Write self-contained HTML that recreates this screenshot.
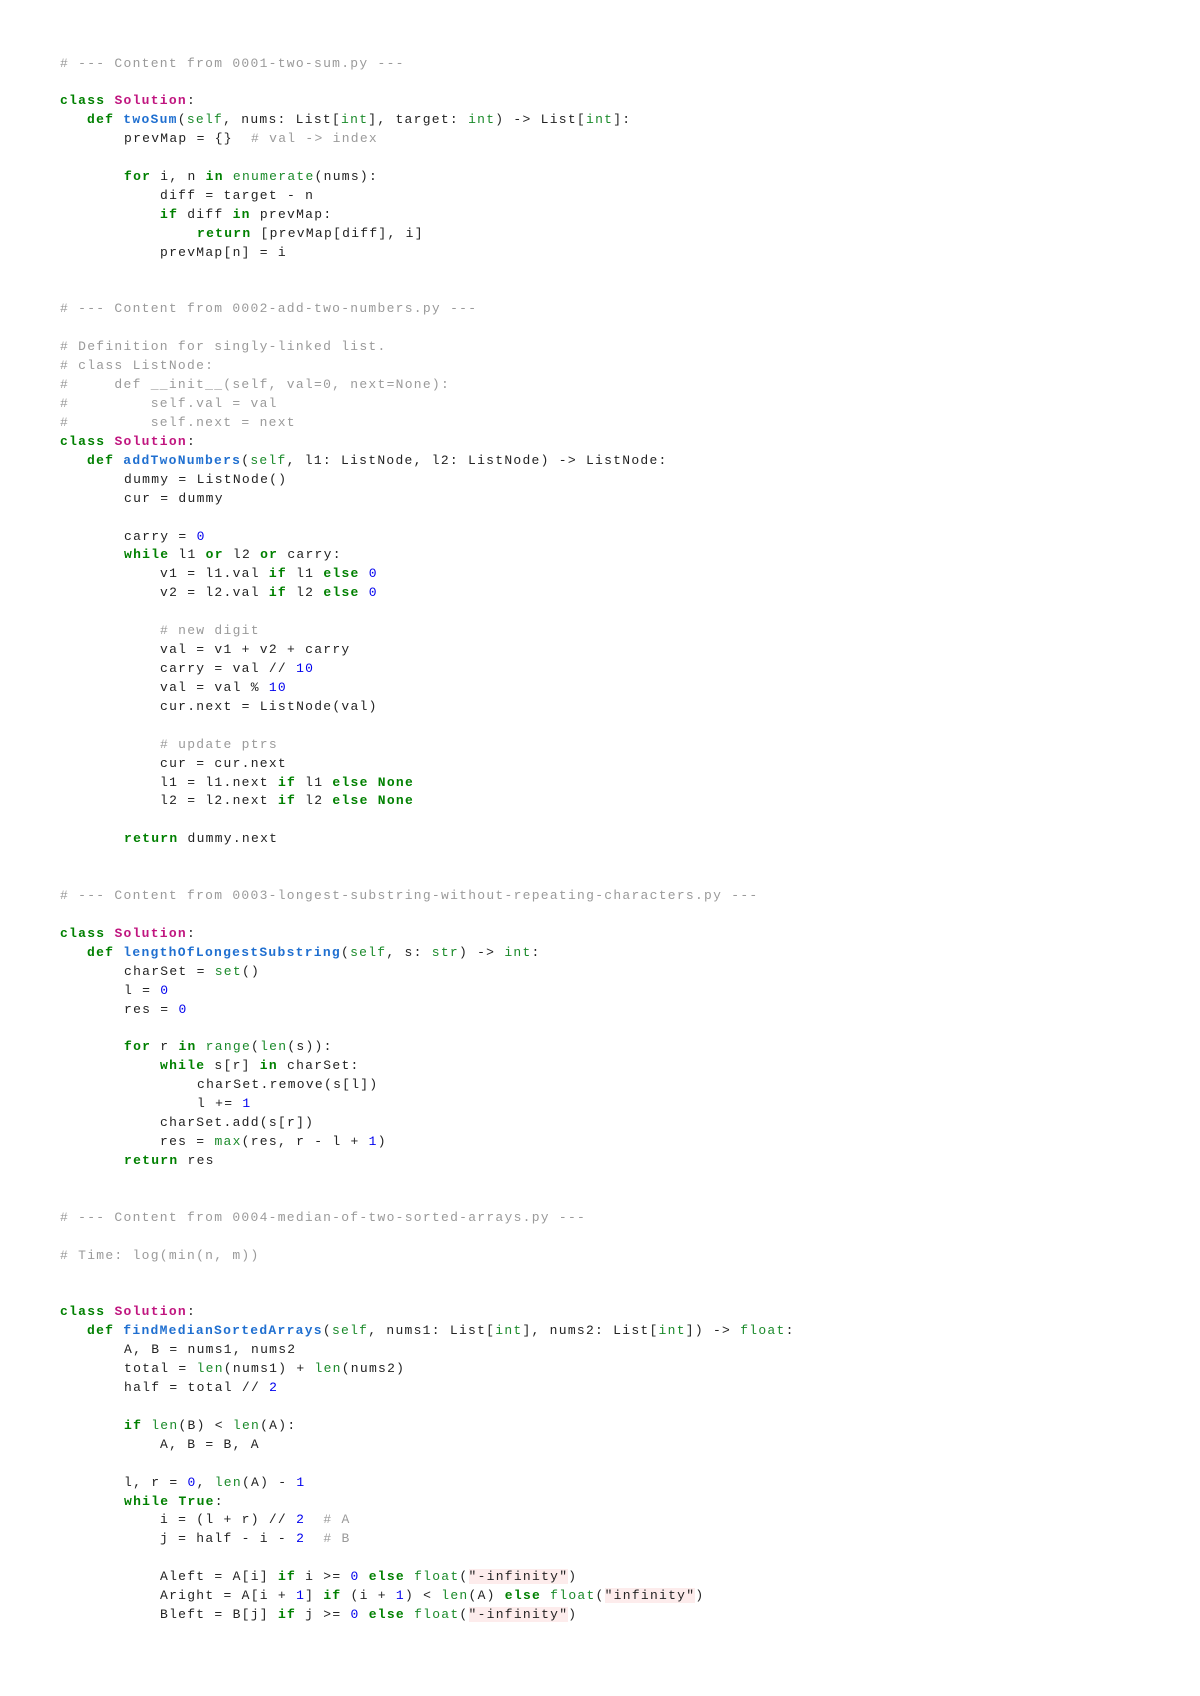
<!DOCTYPE html>
<html><head><meta charset="utf-8"><style>
html,body{margin:0;padding:0;background:#fff;}
body{width:1200px;height:1696px;overflow:hidden;position:relative;}
#c{position:absolute;top:54.5px;left:0;font-family:"Liberation Mono",monospace;font-size:13px;letter-spacing:1.27px;color:#222;}
.l{height:18.93px;line-height:18.93px;white-space:pre;}
.i0{padding-left:60px}.i1{padding-left:87px}.i2{padding-left:124px}.i3{padding-left:160px}.i4{padding-left:197px}
.c{color:#9a9a9a}
.k{color:#008000;font-weight:bold}
.b{color:#1a8a2a}
.n{color:#c0157f;font-weight:bold}
.f{color:#1f6fd0;font-weight:bold}
.d{color:#0000ee}
.s{background:#fdecec}
</style></head><body><div id="c">
<div class="l i0 c"># --- Content from 0001-two-sum.py ---</div>
<div class="l"></div>
<div class="l i0"><span class="k">class</span> <span class="n">Solution</span>:</div>
<div class="l i1"><span class="k">def</span> <span class="f">twoSum</span>(<span class="b">self</span>, nums: List[<span class="b">int</span>], target: <span class="b">int</span>) -&gt; List[<span class="b">int</span>]:</div>
<div class="l i2">prevMap = {}  <span class="c"># val -&gt; index</span></div>
<div class="l"></div>
<div class="l i2"><span class="k">for</span> i, n <span class="k">in</span> <span class="b">enumerate</span>(nums):</div>
<div class="l i3">diff = target - n</div>
<div class="l i3"><span class="k">if</span> diff <span class="k">in</span> prevMap:</div>
<div class="l i4"><span class="k">return</span> [prevMap[diff], i]</div>
<div class="l i3">prevMap[n] = i</div>
<div class="l"></div>
<div class="l"></div>
<div class="l i0 c"># --- Content from 0002-add-two-numbers.py ---</div>
<div class="l"></div>
<div class="l i0 c"># Definition for singly-linked list.</div>
<div class="l i0 c"># class ListNode:</div>
<div class="l i0 c">#     def __init__(self, val=0, next=None):</div>
<div class="l i0 c">#         self.val = val</div>
<div class="l i0 c">#         self.next = next</div>
<div class="l i0"><span class="k">class</span> <span class="n">Solution</span>:</div>
<div class="l i1"><span class="k">def</span> <span class="f">addTwoNumbers</span>(<span class="b">self</span>, l1: ListNode, l2: ListNode) -&gt; ListNode:</div>
<div class="l i2">dummy = ListNode()</div>
<div class="l i2">cur = dummy</div>
<div class="l"></div>
<div class="l i2">carry = <span class="d">0</span></div>
<div class="l i2"><span class="k">while</span> l1 <span class="k">or</span> l2 <span class="k">or</span> carry:</div>
<div class="l i3">v1 = l1.val <span class="k">if</span> l1 <span class="k">else</span> <span class="d">0</span></div>
<div class="l i3">v2 = l2.val <span class="k">if</span> l2 <span class="k">else</span> <span class="d">0</span></div>
<div class="l"></div>
<div class="l i3 c"># new digit</div>
<div class="l i3">val = v1 + v2 + carry</div>
<div class="l i3">carry = val // <span class="d">10</span></div>
<div class="l i3">val = val % <span class="d">10</span></div>
<div class="l i3">cur.next = ListNode(val)</div>
<div class="l"></div>
<div class="l i3 c"># update ptrs</div>
<div class="l i3">cur = cur.next</div>
<div class="l i3">l1 = l1.next <span class="k">if</span> l1 <span class="k">else</span> <span class="k">None</span></div>
<div class="l i3">l2 = l2.next <span class="k">if</span> l2 <span class="k">else</span> <span class="k">None</span></div>
<div class="l"></div>
<div class="l i2"><span class="k">return</span> dummy.next</div>
<div class="l"></div>
<div class="l"></div>
<div class="l i0 c"># --- Content from 0003-longest-substring-without-repeating-characters.py ---</div>
<div class="l"></div>
<div class="l i0"><span class="k">class</span> <span class="n">Solution</span>:</div>
<div class="l i1"><span class="k">def</span> <span class="f">lengthOfLongestSubstring</span>(<span class="b">self</span>, s: <span class="b">str</span>) -&gt; <span class="b">int</span>:</div>
<div class="l i2">charSet = <span class="b">set</span>()</div>
<div class="l i2">l = <span class="d">0</span></div>
<div class="l i2">res = <span class="d">0</span></div>
<div class="l"></div>
<div class="l i2"><span class="k">for</span> r <span class="k">in</span> <span class="b">range</span>(<span class="b">len</span>(s)):</div>
<div class="l i3"><span class="k">while</span> s[r] <span class="k">in</span> charSet:</div>
<div class="l i4">charSet.remove(s[l])</div>
<div class="l i4">l += <span class="d">1</span></div>
<div class="l i3">charSet.add(s[r])</div>
<div class="l i3">res = <span class="b">max</span>(res, r - l + <span class="d">1</span>)</div>
<div class="l i2"><span class="k">return</span> res</div>
<div class="l"></div>
<div class="l"></div>
<div class="l i0 c"># --- Content from 0004-median-of-two-sorted-arrays.py ---</div>
<div class="l"></div>
<div class="l i0 c"># Time: log(min(n, m))</div>
<div class="l"></div>
<div class="l"></div>
<div class="l i0"><span class="k">class</span> <span class="n">Solution</span>:</div>
<div class="l i1"><span class="k">def</span> <span class="f">findMedianSortedArrays</span>(<span class="b">self</span>, nums1: List[<span class="b">int</span>], nums2: List[<span class="b">int</span>]) -&gt; <span class="b">float</span>:</div>
<div class="l i2">A, B = nums1, nums2</div>
<div class="l i2">total = <span class="b">len</span>(nums1) + <span class="b">len</span>(nums2)</div>
<div class="l i2">half = total // <span class="d">2</span></div>
<div class="l"></div>
<div class="l i2"><span class="k">if</span> <span class="b">len</span>(B) &lt; <span class="b">len</span>(A):</div>
<div class="l i3">A, B = B, A</div>
<div class="l"></div>
<div class="l i2">l, r = <span class="d">0</span>, <span class="b">len</span>(A) - <span class="d">1</span></div>
<div class="l i2"><span class="k">while</span> <span class="k">True</span>:</div>
<div class="l i3">i = (l + r) // <span class="d">2</span>  <span class="c"># A</span></div>
<div class="l i3">j = half - i - <span class="d">2</span>  <span class="c"># B</span></div>
<div class="l"></div>
<div class="l i3">Aleft = A[i] <span class="k">if</span> i &gt;= <span class="d">0</span> <span class="k">else</span> <span class="b">float</span>(<span class="s">"-infinity"</span>)</div>
<div class="l i3">Aright = A[i + <span class="d">1</span>] <span class="k">if</span> (i + <span class="d">1</span>) &lt; <span class="b">len</span>(A) <span class="k">else</span> <span class="b">float</span>(<span class="s">"infinity"</span>)</div>
<div class="l i3">Bleft = B[j] <span class="k">if</span> j &gt;= <span class="d">0</span> <span class="k">else</span> <span class="b">float</span>(<span class="s">"-infinity"</span>)</div>
</div></body></html>
